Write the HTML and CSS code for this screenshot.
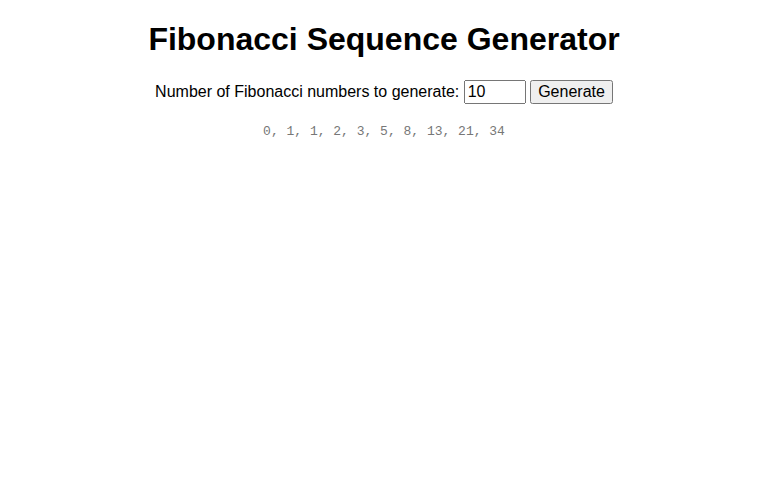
FILE: index.html
```html
<!DOCTYPE html>
<html lang="en">
<head>
    <meta charset="UTF-8" />
    <title>Fibonacci Sequence Generator</title>
    <link rel="stylesheet" href="styles.css">
</head>
<body>
<h1>Fibonacci Sequence Generator</h1>

<div class="controls">
    <label for="count">Number of Fibonacci numbers to generate:</label>
    <input type="number" id="count" value="10" min="1" />
    <button onclick="generate()">Generate</button>
</div>

<div id="output" class="output"></div>

<script>
    function generate() {
      const n = parseInt(document.getElementById("count").value, 10) || 0;
      const seq = [];
      let a = 0, b = 1;
      for (let i = 0; i < n; i++) {
        seq.push(a);
        [a, b] = [b, a + b];
      }
      document.getElementById("output").textContent = seq.join(", ");
    }

    generate();
</script>
</body>
</html>
```

FILE: styles.css
```css
body {
  font-family: "Liberation Sans", Arial, sans-serif;
  text-align: center;
  color: #000;
}
h1 {
  font-size: 32px;
  margin: 13px 0 22px;
}
.controls {
  font-size: 16px;
}
input {
  font-family: "Liberation Sans", Arial, sans-serif;
  font-size: 16px;
  width: 54px;
  padding: 1px 2px;
}
button {
  font-family: "Liberation Sans", Arial, sans-serif;
  font-size: 16px;
}
.output {
  margin-top: 20px;
  font-family: "Liberation Mono", "Courier New", monospace;
  font-size: 13px;
  color: #777;
}
```
